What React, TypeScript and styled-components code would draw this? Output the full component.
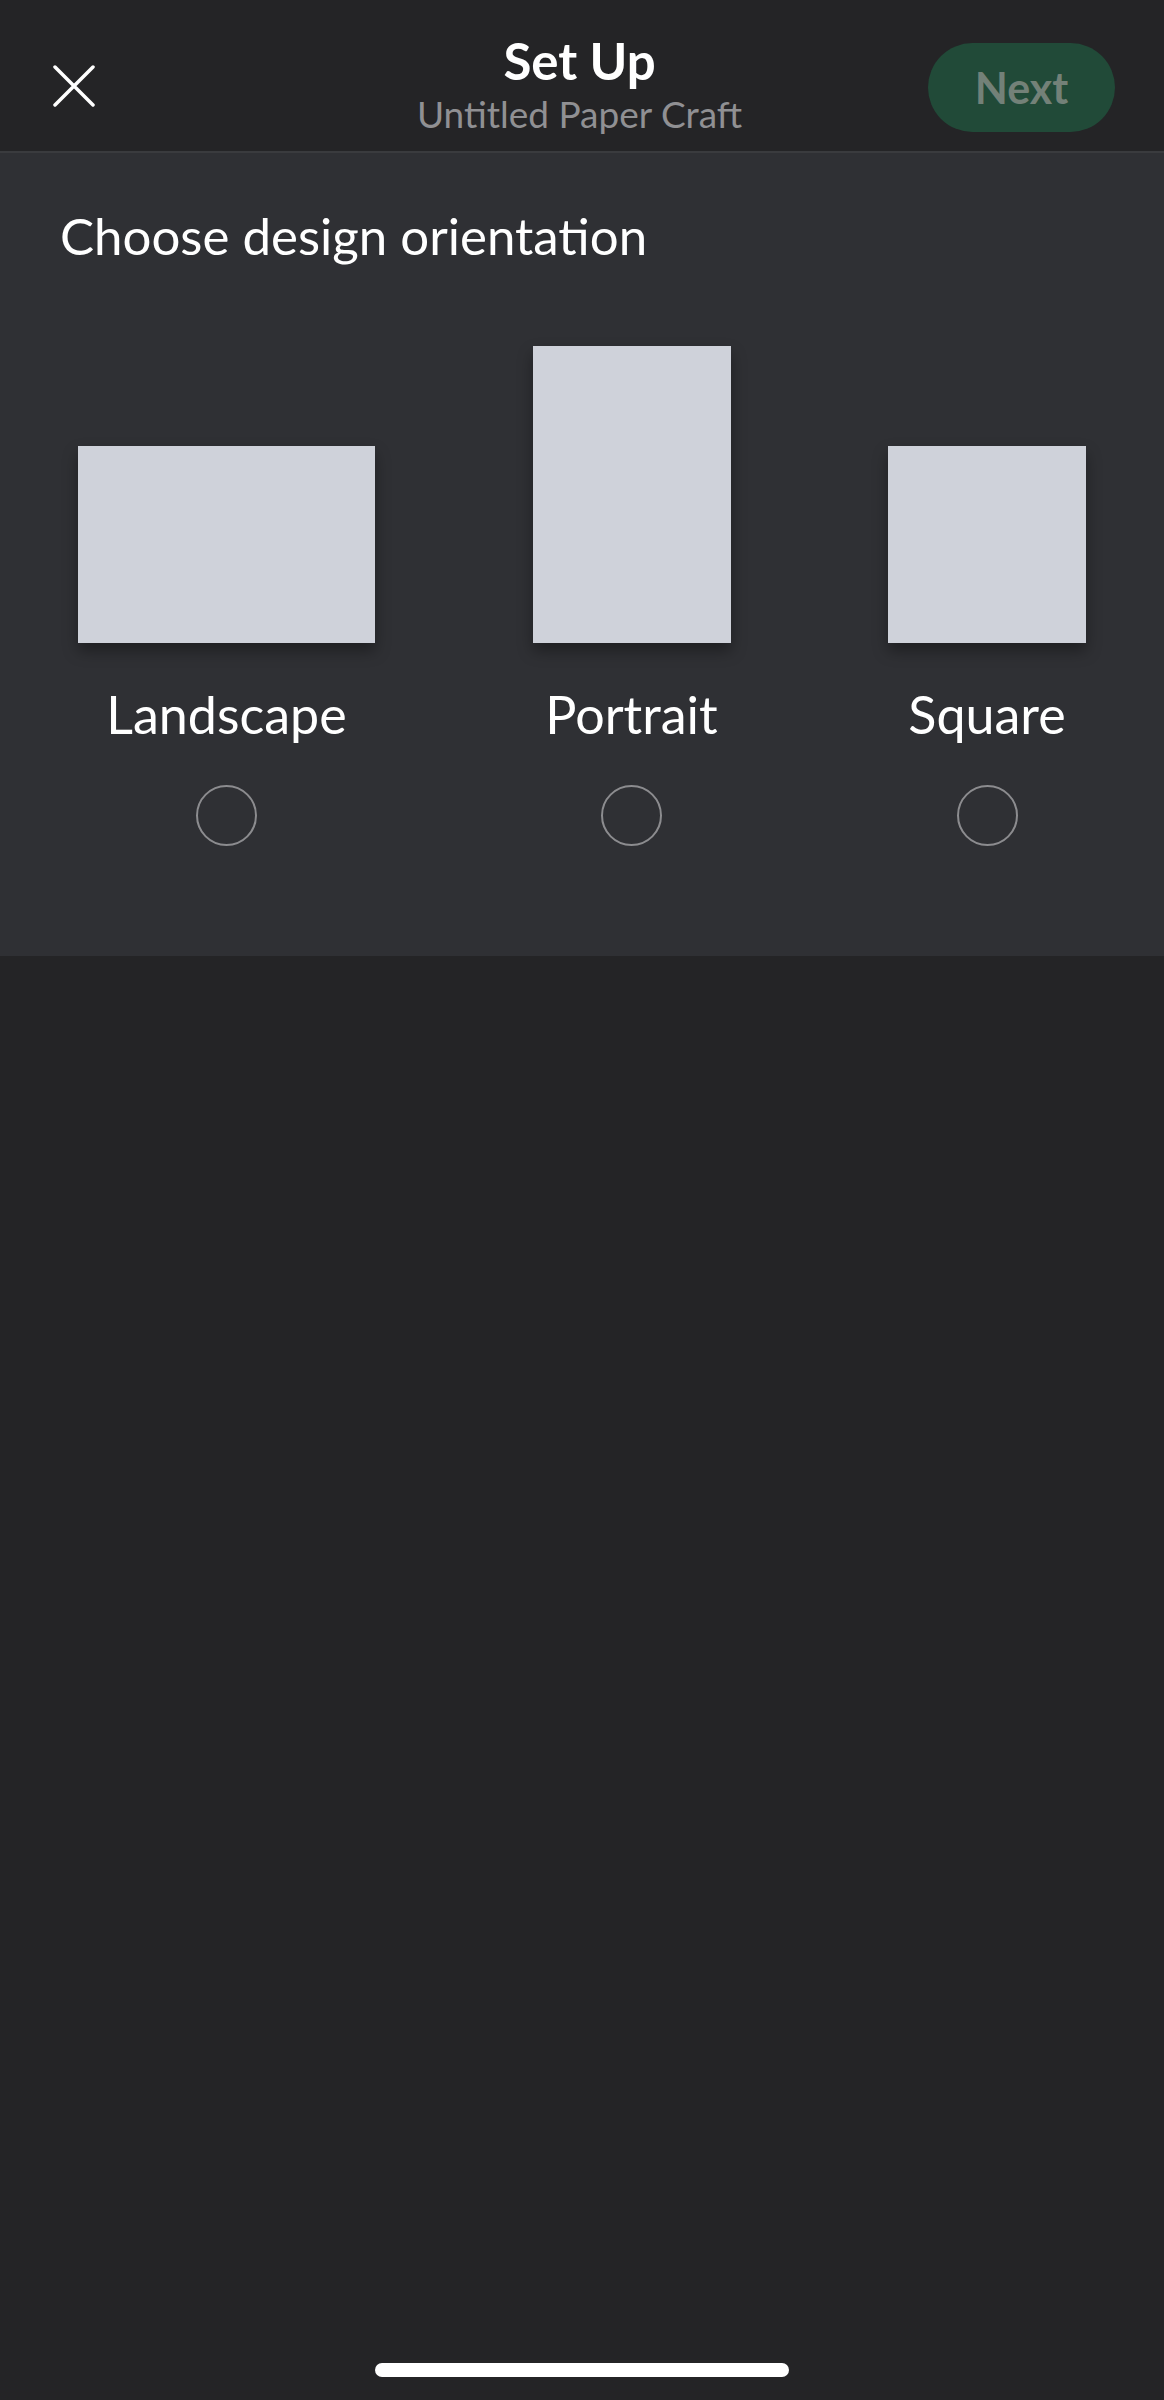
import styled, { createGlobalStyle } from "styled-components";
import { useState } from "react";

const GlobalStyle = createGlobalStyle`
  html, body {
    margin: 0;
    padding: 0;
    background: #242426;
  }
  * {
    box-sizing: border-box;
  }
`;

const Screen = styled.div`
  width: 1164px;
  height: 2400px;
  background: #242426;
  color: #fff;
  font-family: Lato, "Open Sans", sans-serif;
  display: flex;
  flex-direction: column;
`;

const Header = styled.header`
  height: 153px;
  display: grid;
  grid-template-columns: 200px 1fr 200px;
  align-items: center;
  padding: 0 49px 0 44px;
  border-bottom: 2px solid #3a3b3e;
`;

const CloseButton = styled.button`
  width: 60px;
  height: 60px;
  background: none;
  border: none;
  padding: 0;
  display: flex;
  align-items: center;
  justify-content: center;
  margin-top: 20px;
`;

const TitleBlock = styled.div`
  align-self: start;
  padding-top: 31px;
  display: flex;
  flex-direction: column;
  align-items: center;
`;

const Title = styled.h1`
  margin: 0;
  font-size: 51px;
  font-weight: 700;
  line-height: 60px;
`;

const Subtitle = styled.div`
  font-size: 37px;
  color: #909093;
  line-height: 46px;
`;

const NextButton = styled.button`
  justify-self: end;
  width: 187px;
  height: 89px;
  border-radius: 45px;
  border: none;
  background: #214a38;
  color: #738178;
  font-family: Lato, "Open Sans", sans-serif;
  font-size: 43px;
  font-weight: 700;
  margin-top: 23px;
`;

const Panel = styled.section`
  background: #2f3034;
  height: 803px;
  padding: 54px 78px 0;
`;

const Heading = styled.h2`
  margin: 0 0 0 -18px;
  font-size: 51px;
  font-weight: 400;
  line-height: 58px;
`;

const OptionRow = styled.div`
  margin-top: 81px;
  display: flex;
  justify-content: space-between;
`;

const Option = styled.label`
  display: flex;
  flex-direction: column;
  align-items: center;
  cursor: pointer;
`;

const CardSlot = styled.div`
  height: 297px;
  display: flex;
  align-items: flex-end;
`;

const Card = styled.div<{ $w: number; $h: number }>`
  width: ${({ $w }) => $w}px;
  height: ${({ $h }) => $h}px;
  background: #cfd2da;
  box-shadow: 0 8px 14px rgba(0, 0, 0, 0.35);
`;

const OptionLabel = styled.div`
  margin-top: 42px;
  font-size: 52px;
  line-height: 58px;
`;

const Radio = styled.div<{ $on: boolean }>`
  margin-top: 42px;
  width: 61px;
  height: 61px;
  border-radius: 50%;
  border: 2px solid #8c8c8f;
  background: ${({ $on }) => ($on ? "#2f8a5b" : "transparent")};
`;

const Spacer = styled.div`
  flex: 1;
`;

const HomeBar = styled.div`
  align-self: center;
  width: 414px;
  height: 14px;
  border-radius: 7px;
  background: #fff;
  margin-bottom: 23px;
`;

const options = [
  { name: "Landscape", w: 297, h: 197 },
  { name: "Portrait", w: 198, h: 297 },
  { name: "Square", w: 198, h: 197 },
];

export default function App() {
  const [picked, setPicked] = useState<string | null>(null);

  return (
    <>
      <GlobalStyle />
      <Screen>
        <Header>
          <CloseButton aria-label="Close">
            <svg width="42" height="42" viewBox="0 0 42 42">
              <path
                d="M2 2 L40 40 M40 2 L2 40"
                stroke="#fff"
                strokeWidth="3.5"
                strokeLinecap="round"
              />
            </svg>
          </CloseButton>
          <TitleBlock>
            <Title>Set Up</Title>
            <Subtitle>Untitled Paper Craft</Subtitle>
          </TitleBlock>
          <NextButton disabled={!picked}>Next</NextButton>
        </Header>

        <Panel>
          <Heading>Choose design orientation</Heading>
          <OptionRow>
            {options.map((o) => (
              <Option key={o.name} onClick={() => setPicked(o.name)}>
                <CardSlot>
                  <Card $w={o.w} $h={o.h} />
                </CardSlot>
                <OptionLabel>{o.name}</OptionLabel>
                <Radio $on={picked === o.name} />
              </Option>
            ))}
          </OptionRow>
        </Panel>

        <Spacer />
        <HomeBar />
      </Screen>
    </>
  );
}
